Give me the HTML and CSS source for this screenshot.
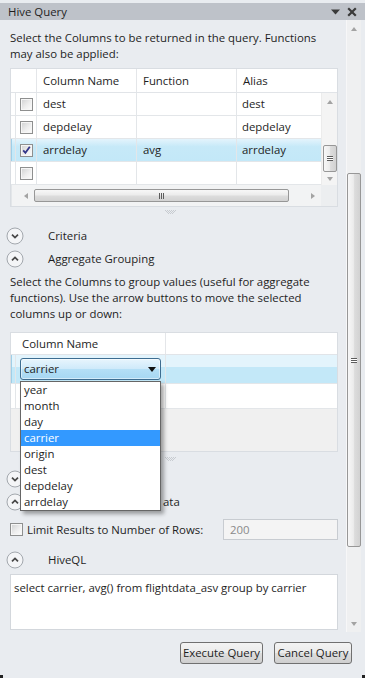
FILE: index.html
```html
<!DOCTYPE html>
<html>
<head>
<meta charset="utf-8">
<title>Hive Query</title>
<link rel="stylesheet" href="styles.css">
</head>
<body>
<div class="window">
  <div class="titlebar">
    <span class="title">Hive Query</span>
    <span class="tb-icons">
      <svg width="9" height="6" viewBox="0 0 9 6"><path d="M0 0.5H9L4.5 5.5Z" fill="#3a3a3a"/></svg>
      <svg width="10" height="10" viewBox="0 0 10 10"><path d="M1.2 1.2L8.8 8.8M8.8 1.2L1.2 8.8" stroke="#3a3a3a" stroke-width="2.2"/></svg>
    </span>
  </div>

  <div class="main">
    <div class="content">
      <p class="desc">Select the Columns to be returned in the query. Functions<br>may also be applied:</p>

      <div class="grid g1">
        <div class="g1-head">
          <div class="hc hc-blank"></div>
          <div class="hc">Column Name</div>
          <div class="hc">Function</div>
          <div class="hc hc-last">Alias</div>
        </div>
        <div class="g1-mid">
          <div class="g1-rows">
            <div class="g1-row">
              <div class="rh"></div>
              <div class="cc"><span class="cb"></span></div>
              <div class="c">dest</div>
              <div class="c"></div>
              <div class="c c-last">dest</div>
            </div>
            <div class="g1-row">
              <div class="rh"></div>
              <div class="cc"><span class="cb"></span></div>
              <div class="c">depdelay</div>
              <div class="c"></div>
              <div class="c c-last">depdelay</div>
            </div>
            <div class="g1-row sel">
              <div class="rh"></div>
              <div class="cc"><span class="cb"><svg width="11" height="11" viewBox="0 0 11 11"><path d="M2.2 5.4L4.4 7.9L8.8 1.8" fill="none" stroke="#34378a" stroke-width="1.8"/></svg></span></div>
              <div class="c">arrdelay</div>
              <div class="c">avg</div>
              <div class="c c-last">arrdelay</div>
            </div>
            <div class="g1-row">
              <div class="rh"></div>
              <div class="cc"><span class="cb"></span></div>
              <div class="c"></div>
              <div class="c"></div>
              <div class="c c-last"></div>
            </div>
          </div>
          <div class="vsb-small">
            <div class="sb-btn"><svg width="6" height="4" viewBox="0 0 6 4"><path d="M0 4L3 0L6 4Z" fill="#a3a3a3"/></svg></div>
            <div class="vsb-small-space"></div>
            <div class="vthumb vthumb-small"><span class="grip-h"></span></div>
            <div class="sb-btn sb-btn-down"><svg width="6" height="4" viewBox="0 0 6 4"><path d="M0 0L6 0L3 4Z" fill="#a3a3a3"/></svg></div>
          </div>
        </div>
        <div class="g1-foot">
          <div class="hsb">
            <div class="hsb-btn"><svg width="4" height="6" viewBox="0 0 4 6"><path d="M4 0V6L0 3Z" fill="#a3a3a3"/></svg></div>
            <div class="hthumb"><span class="grip-v"></span></div>
            <div class="hsb-space"></div>
            <div class="hsb-btn"><svg width="4" height="6" viewBox="0 0 4 6"><path d="M0 0V6L4 3Z" fill="#a3a3a3"/></svg></div>
          </div>
          <div class="corner"></div>
        </div>
      </div>

      <div class="splitter"><svg width="12" height="5" viewBox="0 0 12 5"><g fill="#c7cbd0"><rect x="0" y="0" width="1" height="1"/><rect x="2" y="0" width="1" height="1"/><rect x="4" y="0" width="1" height="1"/><rect x="6" y="0" width="1" height="1"/><rect x="8" y="0" width="1" height="1"/><rect x="10" y="0" width="1" height="1"/><rect x="1" y="1" width="1" height="1"/><rect x="3" y="1" width="1" height="1"/><rect x="5" y="1" width="1" height="1"/><rect x="7" y="1" width="1" height="1"/><rect x="9" y="1" width="1" height="1"/><rect x="2" y="2" width="1" height="1"/><rect x="4" y="2" width="1" height="1"/><rect x="6" y="2" width="1" height="1"/><rect x="8" y="2" width="1" height="1"/><rect x="3" y="3" width="1" height="1"/><rect x="5" y="3" width="1" height="1"/><rect x="7" y="3" width="1" height="1"/></g></svg></div>

      <div class="expander">
        <svg class="exp-ic" width="18" height="18" viewBox="0 0 18 18"><circle cx="9" cy="9" r="8" fill="#f4f5f7" stroke="#a3a8ae"/><path d="M6 7.6L9 10.6L12 7.6" fill="none" stroke="#474747" stroke-width="1.7"/></svg>
        <span class="exp-label">Criteria</span>
      </div>
      <div class="expander">
        <svg class="exp-ic" width="18" height="18" viewBox="0 0 18 18"><circle cx="9" cy="9" r="8" fill="#f4f5f7" stroke="#a3a8ae"/><path d="M6 10.4L9 7.4L12 10.4" fill="none" stroke="#474747" stroke-width="1.7"/></svg>
        <span class="exp-label">Aggregate Grouping</span>
      </div>

      <p class="desc desc2">Select the Columns to group values (useful for aggregate<br>functions). Use the arrow buttons to move the selected<br>columns up or down:</p>

      <div class="grid g2">
        <div class="g2-head">
          <div class="hc2">Column Name</div>
          <div class="hc2 hc2-last"></div>
        </div>
        <div class="g2-row sel2">
          <div class="rh rh-sel"></div>
          <div class="c2">
            <div class="combo"><span>carrier</span><svg width="8" height="5" viewBox="0 0 8 5"><path d="M0 0H8L4 5Z" fill="#111"/></svg></div>
          </div>
          <div class="c2 c2-last"></div>
        </div>
        <div class="g2-row g2-row2">
          <div class="rh"></div>
          <div class="c2"></div>
          <div class="c2 c2-last"></div>
        </div>
        <div class="g2-fill"></div>
      </div>

      <div class="splitter splitter2"><svg width="12" height="5" viewBox="0 0 12 5"><g fill="#c7cbd0"><rect x="0" y="0" width="1" height="1"/><rect x="2" y="0" width="1" height="1"/><rect x="4" y="0" width="1" height="1"/><rect x="6" y="0" width="1" height="1"/><rect x="8" y="0" width="1" height="1"/><rect x="10" y="0" width="1" height="1"/><rect x="1" y="1" width="1" height="1"/><rect x="3" y="1" width="1" height="1"/><rect x="5" y="1" width="1" height="1"/><rect x="7" y="1" width="1" height="1"/><rect x="9" y="1" width="1" height="1"/><rect x="2" y="2" width="1" height="1"/><rect x="4" y="2" width="1" height="1"/><rect x="6" y="2" width="1" height="1"/><rect x="8" y="2" width="1" height="1"/><rect x="3" y="3" width="1" height="1"/><rect x="5" y="3" width="1" height="1"/><rect x="7" y="3" width="1" height="1"/></g></svg></div>

      <div class="expander">
        <svg class="exp-ic" width="18" height="18" viewBox="0 0 18 18"><circle cx="9" cy="9" r="8" fill="#f4f5f7" stroke="#a3a8ae"/><path d="M6 7.6L9 10.6L12 7.6" fill="none" stroke="#474747" stroke-width="1.7"/></svg>
      </div>
      <div class="expander">
        <svg class="exp-ic" width="18" height="18" viewBox="0 0 18 18"><circle cx="9" cy="9" r="8" fill="#f4f5f7" stroke="#a3a8ae"/><path d="M6 10.4L9 7.4L12 10.4" fill="none" stroke="#474747" stroke-width="1.7"/></svg>
        <span class="exp-label exp-tail">ata</span>
      </div>

      <div class="limit-row">
        <span class="cb"></span>
        <span class="limit-label">Limit Results to Number of Rows:</span>
        <div class="numbox">200</div>
      </div>

      <div class="expander expander-hql">
        <svg class="exp-ic" width="18" height="18" viewBox="0 0 18 18"><circle cx="9" cy="9" r="8" fill="#f4f5f7" stroke="#a3a8ae"/><path d="M6 10.4L9 7.4L12 10.4" fill="none" stroke="#474747" stroke-width="1.7"/></svg>
        <span class="exp-label">HiveQL</span>
      </div>

      <div class="sql">select carrier, avg() from flightdata_asv group by carrier</div>
    </div>

    <div class="vscroll">
      <div class="sb-btn sb-btn-main"><svg width="6" height="4" viewBox="0 0 6 4"><path d="M0 4L3 0L6 4Z" fill="#a3a3a3"/></svg></div>
      <div class="vscroll-space"></div>
      <div class="vthumb vthumb-main"><span class="grip-h"></span></div>
      <div class="vscroll-fill"></div>
      <div class="sb-btn sb-btn-main"><svg width="6" height="4" viewBox="0 0 6 4"><path d="M0 0L6 0L3 4Z" fill="#a3a3a3"/></svg></div>
    </div>
  </div>

  <div class="buttons">
    <button class="btn btn-exec">Execute Query</button>
    <button class="btn btn-cancel">Cancel Query</button>
  </div>
  <div class="bottom-edge"><span class="mark"></span><span class="mark"></span></div>

  <div class="popup">
    <div class="item">year</div>
    <div class="item">month</div>
    <div class="item">day</div>
    <div class="item item-sel">carrier</div>
    <div class="item">origin</div>
    <div class="item">dest</div>
    <div class="item">depdelay</div>
    <div class="item">arrdelay</div>
  </div>
</div>
</body>
</html>
```

FILE: styles.css
```css
* { box-sizing: border-box; }
html, body { margin: 0; padding: 0; }
body {
  width: 365px;
  height: 678px;
  overflow: hidden;
  background: #e9ecf0;
  font-family: "Open Sans", "Noto Sans", sans-serif;
  font-size: 11.4px;
  line-height: 16px;
  color: #1e1e1e;
}
.window {
  position: relative;
  width: 365px;
  height: 678px;
  display: flex;
  flex-direction: column;
  padding-top: 3px;
}
.titlebar {
  height: 17px;
  flex: none;
  background: #bec2c9;
  display: flex;
  align-items: center;
  justify-content: space-between;
  padding: 0 8px;
}
.title { font-size: 11.4px; color: #1e1e1e; }
.tb-icons { display: flex; align-items: center; gap: 7px; }
.tb-icons svg { display: block; }

.main { height: 614px; flex: none; display: flex; }
.content {
  width: 338px;
  padding-left: 10px;
  display: flex;
  flex-direction: column;
}
.desc { margin: 10px 0 0 0; }
.desc2 { margin-top: 4px; }

/* grid 1 */
.grid {
  width: 328px;
  border: 1px solid #d9dde2;
  background: #fff;
  flex: none;
}
.g1 { margin-top: 6px; }
.g1-head { display: flex; height: 24px; border-bottom: 1px solid #e1e4e8; }
.hc {
  width: 100px;
  padding-left: 6px;
  border-right: 1px solid #e4e6e9;
  display: flex;
  align-items: center;
  white-space: nowrap;
}
.hc-blank { width: 26px; padding: 0; }
.hc-last { border-right: none; }
.g1-mid { display: flex; height: 92px; }
.g1-rows { width: 310px; }
.g1-row { display: flex; height: 23px; border-bottom: 1px solid #e3e6e9; }
.rh { width: 5px; border-right: 1px solid #e3e6e9; }
.cc {
  width: 21px;
  border-right: 1px solid #e3e6e9;
  display: flex;
  align-items: center;
  padding-left: 4px;
}
.c {
  width: 100px;
  border-right: 1px solid #e3e6e9;
  padding-left: 6px;
  display: flex;
  align-items: center;
  white-space: nowrap;
}
.c-last { width: 84px; border-right: none; padding-left: 5px; }
.g1-row.sel { background: linear-gradient(#e4f4fc 0%, #c6e9f8 35%, #c3e8f8 100%); }
.g1-row.sel .rh { border-left: 1px solid #9fcfe8; }

.cb {
  width: 13px;
  height: 13px;
  border: 1px solid #8e8f8f;
  background: linear-gradient(135deg, #cfd0d1 0%, #eeeeee 55%, #fdfdfd 100%);
  box-shadow: inset 0 0 0 1px #f6f6f6;
  display: flex;
  align-items: center;
  justify-content: center;
  flex: none;
}
.cb svg { display: block; }

.vsb-small {
  width: 16px;
  display: flex;
  flex-direction: column;
  align-items: center;
  background: #f4f4f4;
  border-left: 1px solid #ececec;
}
.sb-btn {
  width: 100%;
  height: 17px;
  flex: none;
  display: flex;
  align-items: center;
  justify-content: center;
}
.sb-btn svg { display: block; }
.sb-btn-down { height: 13px; }
.vsb-small-space { height: 35px; flex: none; }
.vthumb {
  width: 14px;
  border: 1px solid #979797;
  border-radius: 2px;
  background: linear-gradient(90deg, #f7f7f7 0%, #ececec 45%, #dcdcdc 55%, #d2d2d2 100%);
  display: flex;
  align-items: center;
  justify-content: center;
  flex: none;
}
.vthumb-small { height: 27px; }
.grip-h {
  width: 6px;
  height: 5px;
  border-top: 1px solid #5c5c5c;
  border-bottom: 1px solid #5c5c5c;
  background: linear-gradient(#fff 0 1px, #5c5c5c 1px 2px, #fff 2px);
}

.g1-foot { display: flex; height: 21px; }
.hsb {
  width: 310px;
  display: flex;
  align-items: center;
  padding-left: 5px;
  background: #f2f3f4;
  border-left: 1px solid #e3e6e9;
}
.hsb-btn {
  width: 17px;
  height: 100%;
  display: flex;
  align-items: center;
  justify-content: center;
  flex: none;
}
.hthumb {
  width: 255px;
  height: 13px;
  border: 1px solid #979797;
  border-radius: 2px;
  background: linear-gradient(#f7f7f7 0%, #ececec 45%, #dcdcdc 55%, #d2d2d2 100%);
  display: flex;
  align-items: center;
  justify-content: center;
  flex: none;
}
.grip-v {
  width: 5px;
  height: 6px;
  border-left: 1px solid #5c5c5c;
  border-right: 1px solid #5c5c5c;
  background: linear-gradient(90deg, transparent 0 1px, #5c5c5c 1px 2px, transparent 2px);
}
.hsb-space { flex: 1; }
.corner { width: 16px; background: #eceef0; }

.splitter {
  height: 17px;
  flex: none;
  display: flex;
  justify-content: center;
  padding-top: 3px;
  padding-right: 6px;
}
.splitter svg { display: block; }
.splitter2 { height: 15px; padding-top: 5px; }

.expander {
  height: 23px;
  flex: none;
  display: flex;
  align-items: center;
}
.exp-ic { display: block; margin-left: -4px; flex: none; }
.exp-label { margin-left: 24px; white-space: nowrap; }
.exp-tail { margin-left: 139px; }
.expander-hql { margin-top: 5px; }

/* grid 2 */
.g2 { margin-top: 10px; background: #f0f0f0; }
.g2-head { display: flex; height: 22px; background: #fff; border-bottom: 1px solid #e1e4e8; }
.hc2 {
  width: 155px;
  padding-left: 11px;
  border-right: 1px solid #e4e6e9;
  display: flex;
  align-items: center;
}
.hc2-last { width: 171px; border-right: none; }
.g2-row { display: flex; height: 29px; background: #fff; border-bottom: 1px solid #e3e6e9; }
.g2-row2 { height: 25px; }
.sel2 { background: linear-gradient(#e3f4fc 0%, #e3f4fc 42%, #c3e8f8 44%, #c3e8f8 100%); }
.rh-sel { border-left: 1px solid #9fcfe8; }
.c2 { width: 150px; border-right: 1px solid #e3e6e9; padding: 3px 0 0 4px; }
.c2-last { width: 171px; border-right: none; }
.g2-fill { height: 42px; }

.combo {
  width: 141px;
  height: 22px;
  border: 1px solid #3d6d91;
  border-radius: 3px;
  background: linear-gradient(#e8f5fd 0%, #cfeafa 48%, #b4dff6 52%, #a6d7f2 100%);
  box-shadow: inset 0 0 0 1px rgba(255,255,255,0.5);
  display: flex;
  align-items: center;
  justify-content: space-between;
  padding: 0 4px 0 3px;
}
.combo svg { display: block; }

.limit-row {
  height: 30px;
  flex: none;
  display: flex;
  align-items: flex-start;
  padding-top: 6px;
}
.limit-row .cb { margin-top: 4px; }
.limit-label { margin-left: 4px; margin-top: 3px; white-space: nowrap; }
.numbox {
  margin-left: auto;
  width: 115px;
  height: 21px;
  border: 1px solid #c8ccd1;
  background: #f4f4f4;
  color: #8a8a8a;
  padding-left: 6px;
  line-height: 19px;
}

.sql {
  margin-top: 3px;
  width: 328px;
  height: 56px;
  flex: none;
  background: #fff;
  border: 1px solid #d3d7dc;
  padding: 5px 3px;
  white-space: nowrap;
}

/* main scrollbar */
.vscroll {
  width: 15px;
  margin-left: 8px;
  height: 612px;
  display: flex;
  flex-direction: column;
  align-items: center;
  background: #eff0f1;
  border-left: 1px solid #f7f7f8;
}
.sb-btn-main { height: 17px; }
.vscroll-space { height: 136px; flex: none; }
.vthumb-main { width: 14px; height: 374px; }
.vscroll-fill { flex: 1; }

.buttons {
  margin-top: 8px;
  height: 22px;
  flex: none;
  display: flex;
  justify-content: flex-end;
  gap: 11px;
  padding-right: 13px;
}
.btn {
  height: 22px;
  padding: 0;
  margin: 0;
  border: 1px solid #707070;
  border-radius: 3px;
  background: linear-gradient(#f3f3f3 0%, #ebebeb 48%, #dddddd 52%, #cfcfcf 100%);
  font-family: "Open Sans", "Noto Sans", sans-serif;
  font-size: 11.4px;
  color: #1e1e1e;
  line-height: 20px;
}
.btn-exec { width: 83px; }
.btn-cancel { width: 78px; }

.bottom-edge {
  margin-top: 11px;
  height: 3px;
  display: flex;
  justify-content: space-between;
}
.mark { width: 3px; height: 3px; background: #222; }

.popup {
  position: absolute;
  left: 20px;
  top: 381px;
  width: 141px;
  border: 1px solid #666;
  background: #fff;
  box-shadow: 3px 3px 4px rgba(0, 0, 0, 0.35);
}
.item { height: 16px; line-height: 16px; padding-left: 3px; }
.item-sel { background: #3399ff; color: #fff; }
```
